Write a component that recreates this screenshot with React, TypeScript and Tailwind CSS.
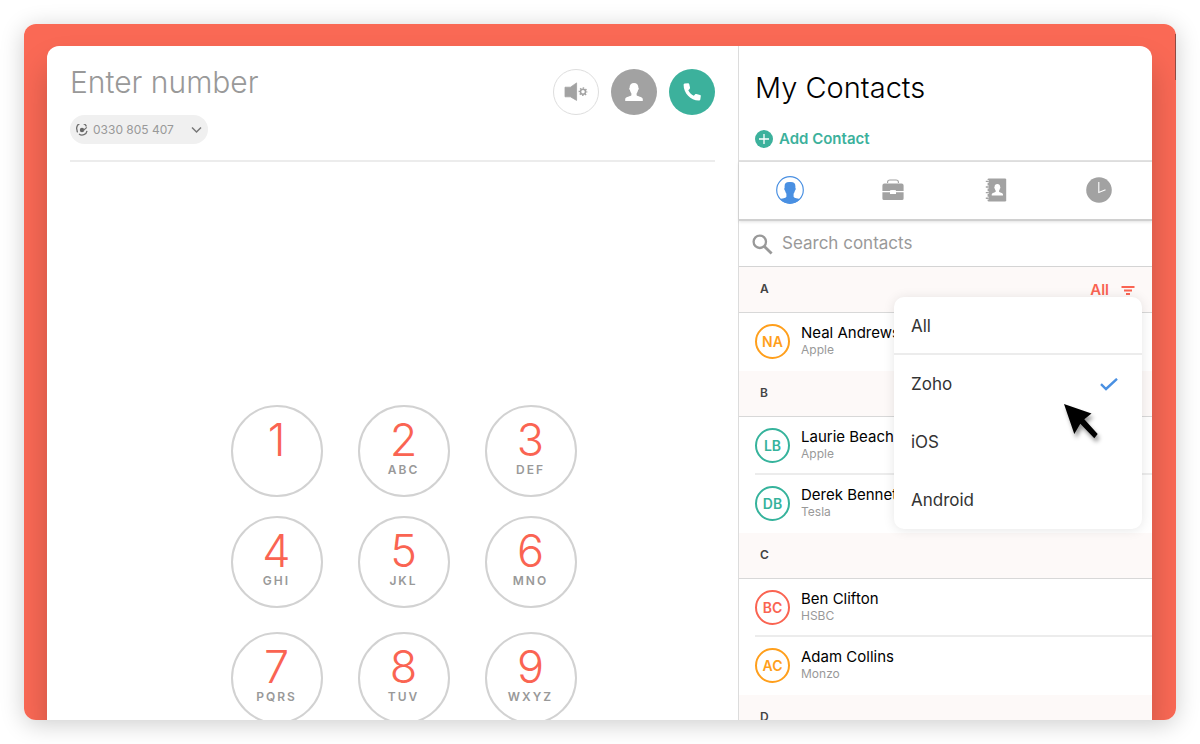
import { useState, type ReactNode } from "react";

type Contact = { initials: string; name: string; company: string; tone: string };
type Group = { letter: string; contacts: Contact[] };

const orange = "border-[#ff9f1c] text-[#ff9f1c]";
const teal = "border-[#36b39c] text-[#36b39c]";
const coral = "border-[#fa6452] text-[#fa6452]";

const groups: Group[] = [
  { letter: "A", contacts: [{ initials: "NA", name: "Neal Andrews", company: "Apple", tone: orange }] },
  {
    letter: "B",
    contacts: [
      { initials: "LB", name: "Laurie Beach", company: "Apple", tone: teal },
      { initials: "DB", name: "Derek Bennet", company: "Tesla", tone: teal },
    ],
  },
  {
    letter: "C",
    contacts: [
      { initials: "BC", name: "Ben Clifton", company: "HSBC", tone: coral },
      { initials: "AC", name: "Adam Collins", company: "Monzo", tone: orange },
    ],
  },
  { letter: "D", contacts: [] },
];

const keys: [string, string][] = [
  ["1", ""],
  ["2", "ABC"],
  ["3", "DEF"],
  ["4", "GHI"],
  ["5", "JKL"],
  ["6", "MNO"],
  ["7", "PQRS"],
  ["8", "TUV"],
  ["9", "WXYZ"],
];

const PERSON =
  "M9 0C11.8 0 13.4 2 13.4 4.8C14 5 13.9 6.8 13.1 7.1C12.8 8.6 12.2 9.7 11.6 10.4V12.3C12.4 13.4 17.2 13.7 17.8 15.9V18H0.2V15.9C0.8 13.7 5.6 13.4 6.4 12.3V10.4C5.8 9.7 5.2 8.6 4.9 7.1C4.1 6.8 4 5 4.6 4.8C4.6 2 6.2 0 9 0Z";

function SpeakerIcon() {
  return (
    <svg width="24" height="20" viewBox="0 0 24 20" fill="#a2a2a2" aria-hidden="true">
      <path d="M1 5.2h5.4L12.6 0.9V18.4L6.4 14.8H1Z" stroke="#a2a2a2" strokeWidth=".8" strokeLinejoin="round" />
      <circle cx="19" cy="9.700" r="2.500" fill="none" stroke="#a2a2a2" strokeWidth="1.500" />
      <circle cx="19" cy="9.700" r="3.700" fill="none" stroke="#a2a2a2" strokeWidth="1.400" strokeDasharray="1.453 1.453" strokeDashoffset=".73" />
    </svg>
  );
}

function ProfileIcon() {
  return (
    <svg width="28" height="28" viewBox="0 0 28 28" aria-hidden="true">
      <circle cx="14" cy="14" r="13.300" fill="#fff" stroke="#4a90e2" strokeWidth="1.200" />
      <path
        fill="#4a90e2"
        d="M14 6c3.600-.3 5.500 1 5.400 4.400v1.500c.6.300.4 2.400-.4 2.700-.3 1.400-.7 2.500-1.400 3.200v3c.8 1.600 4.600 1.300 6 2.600A13.300 13.300 0 0 1 4.400 23.400c1.400-1.300 5.200-1 6-2.600v-3c-.7-.7-1.100-1.800-1.400-3.200-.8-.3-1-2.400-.4-2.700v-1.500C8.500 7 10.400 5.700 14 6Z"
      />
    </svg>
  );
}

function BriefcaseIcon() {
  return (
    <svg width="22" height="22" viewBox="0 0 22 22" aria-hidden="true">
      <path d="M5.600 4V3Q5.600 1 8 1H14Q16.400 1 16.400 3V4" fill="none" stroke="#a2a2a2" strokeWidth="1.100" />
      <path fill="#a2a2a2" d="M2.400 4.500h17.200q2 0 2 2v5.500h-7.600v-.8H8v.8H.4V6.500Q.4 4.500 2.400 4.500Z" />
      <path fill="#a2a2a2" d="M.4 13.200h7.600v1.700h6v-1.700h7.600v6.300q0 1.600-1.600 1.600H2q-1.600 0-1.600-1.600Z" />
      <rect x="9" y="11.200" width="4" height="3" rx=".6" fill="#fff" />
    </svg>
  );
}

function AddressBookIcon() {
  return (
    <svg width="22" height="24" viewBox="0 0 22 24" aria-hidden="true">
      <rect x="2.600" y=".4" width="18.600" height="23" rx="1.200" fill="#a2a2a2" />
      <path d="M2 3.400h1.800M2 9h1.800M2 14.600h1.800M2 20.200h1.800" stroke="#fff" strokeWidth="2.800" />
      <path d="M.8 3.400h3M.8 9h3M.8 14.600h3M.8 20.200h3" stroke="#a2a2a2" strokeWidth="1.400" />
      <g transform="translate(6.600 6) scale(.64)">
        <path fill="#fff" d={PERSON} />
      </g>
    </svg>
  );
}

function ClockIcon() {
  return (
    <svg width="26" height="26" viewBox="0 0 26 26" aria-hidden="true">
      <circle cx="13" cy="13" r="12.800" fill="#a2a2a2" />
      <path d="M12.800 5V15.500L19.500 12.800" fill="none" stroke="#fff" strokeWidth="1.100" />
    </svg>
  );
}

function RoundButton({ label, className, children }: { label: string; className: string; children: ReactNode }) {
  return (
    <button aria-label={label} className={`flex size-[46px] items-center justify-center rounded-full ${className}`}>
      {children}
    </button>
  );
}

function Dialler() {
  return (
    <section className="flex min-w-0 flex-1 flex-col px-[23px]">
      <header className="flex h-[116px] shrink-0 items-start justify-between border-b-2 border-[#ececec] pt-[23px]">
        <div className="flex min-w-0 flex-col items-start">
          <input
            aria-label="Enter number"
            placeholder="Enter number"
            className="h-[26px] w-80 bg-transparent text-[30px] leading-[26px] font-light text-[#333] outline-none placeholder:text-[#999]"
          />
          <div className="relative mt-5">
            <svg className="pointer-events-none absolute top-[9px] left-[6px]" width="12" height="12" viewBox="0 0 12 12" fill="none" stroke="#707070" aria-hidden="true">
              <path d="M10.400 2.400A5 5 0 0 0 1 6a5 5 0 0 0 .6 2.400M3 10a5 5 0 0 0 8-3.200" strokeWidth="1.300" />
              <circle cx="6" cy="6" r="2.200" fill="#666" stroke="none" />
              <path d="M7 6.800 10.800 3.400" strokeWidth="1.200" />
            </svg>
            <select
              aria-label="Outgoing number"
              className="h-[29px] w-[138px] appearance-none rounded-full bg-[#f0f0f0] pl-[23px] text-[12px] text-[#999] outline-none"
            >
              <option>0330 805 407</option>
            </select>
            <svg className="pointer-events-none absolute top-[11px] right-[6px]" width="11" height="8" viewBox="0 0 11 8" fill="none" stroke="#777" strokeWidth="1.500" aria-hidden="true">
              <path d="M1 1.500 5.500 6 10 1.500" />
            </svg>
          </div>
        </div>
        <div className="flex gap-3">
          <RoundButton label="Audio settings" className="border border-[#dedede] bg-white">
            <SpeakerIcon />
          </RoundButton>
          <RoundButton label="Choose contact" className="bg-[#a2a2a2]">
            <svg width="18" height="18" viewBox="0 0 18 18" fill="#fff" aria-hidden="true">
              <path d={PERSON} />
            </svg>
          </RoundButton>
          <RoundButton label="Call" className="bg-[#3cb19c]">
            <svg width="18" height="18" viewBox="0 0 18 18" fill="#fff" aria-hidden="true">
              <path d="M1.600.6 5 .2C5.700.1 6 .5 6.200 1L7 4.600C7.100 5.200 7 5.600 6.600 6L5.300 7.200C6.500 9.600 8.300 11.400 10.800 12.700L12 11.500C12.400 11.100 12.900 11 13.400 11.100L17 11.900C17.600 12 17.900 12.400 17.800 13L17.300 16.400C17.200 17.100 16.800 17.500 16.100 17.500C7.700 17.700.600 10.500.600 1.800.600 1.100.900.700 1.600.6Z" />
            </svg>
          </RoundButton>
        </div>
      </header>
      <div className="flex justify-center pt-[243px] pl-[22px]">
        <div className="grid grid-cols-3 grid-rows-[111px_116px_92px] gap-x-[35px]">
          {keys.map(([digit, letters]) => (
            <button key={digit} className="flex size-[92px] flex-col items-center rounded-full border-2 border-[#d2d2d2] pt-[11px]">
              <span className="text-[45px] leading-[44px] font-light text-[#fa6452]">{digit}</span>
              <span className="text-[12px] leading-4 font-semibold tracking-[2px] text-[#999]">{letters}</span>
            </button>
          ))}
        </div>
      </div>
    </section>
  );
}

function FilterMenu({ value, onChange }: { value: string; onChange: (v: string) => void }) {
  return (
    <div className="absolute top-[30px] right-[10px] z-10 w-[248px] rounded-[10px] bg-white shadow-[0_1px_12px_rgba(0,0,0,0.10)]">
      <ul>
        {["All", "Zoho", "iOS", "Android"].map((option) => (
          <li key={option} className="h-[58px] first:border-b-2 first:border-[#ececec]">
            <button
              onClick={() => onChange(option)}
              className="flex h-[58px] w-full items-center justify-between pt-px pr-6 pl-[17px] text-left text-[17px] text-[#333]"
            >
              {option}
              {option === value && (
                <svg width="18" height="14" viewBox="0 0 18 14" fill="none" stroke="#4a90e2" strokeWidth="2.400" aria-hidden="true">
                  <path d="M1 6.200 6 11 17 .8" />
                </svg>
              )}
            </button>
          </li>
        ))}
      </ul>
      <svg
        className="pointer-events-none absolute top-[107px] left-[170px] overflow-visible drop-shadow-[2px_4px_2px_rgba(0,0,0,0.4)]"
        width="34"
        height="35"
        viewBox="0 0 34 35"
        aria-hidden="true"
      >
        <path d="M0 0 27.500 9.500 20.300 15.300 33.700 30 30.300 34.300 16.300 19.700 10.300 30Z" />
      </svg>
    </div>
  );
}

function Contacts() {
  const [filter, setFilter] = useState("Zoho");
  return (
    <aside className="flex w-[414px] shrink-0 flex-col border-l border-[#dcdcdc]">
      <header className="flex h-[116px] shrink-0 flex-col items-start border-b-2 border-[#e2e2e2] pt-6 pl-4">
        <h1 className="text-[29px] leading-9 font-light text-black">My Contacts</h1>
        <button className="mt-[23px] flex items-center gap-[6px] text-[15px] leading-5 font-semibold text-[#3cb19c]">
          <svg width="18" height="18" viewBox="0 0 18 18" aria-hidden="true">
            <circle cx="9" cy="9" r="9" fill="#3cb19c" />
            <path d="M9 4v10M4 9h10" stroke="#fff" strokeWidth="1.300" />
          </svg>
          Add Contact
        </button>
      </header>
      <nav className="grid h-[59px] shrink-0 grid-cols-4 border-b-2 border-[#d0d0d0] pr-[2px] pb-px shadow-[0_1px_3px_rgba(0,0,0,0.12)]">
        <button aria-label="People" className="flex items-center justify-center">
          <ProfileIcon />
        </button>
        <button aria-label="Companies" className="flex items-center justify-center">
          <BriefcaseIcon />
        </button>
        <button aria-label="Address book" className="flex items-center justify-center">
          <AddressBookIcon />
        </button>
        <button aria-label="Recent" className="flex items-center justify-center">
          <ClockIcon />
        </button>
      </nav>
      <label className="flex h-[46px] shrink-0 items-center gap-[9px] border-b border-[#d4d4d4] pt-px pl-[13px]">
        <svg width="21" height="21" viewBox="0 0 21 21" fill="none" stroke="#999" aria-hidden="true">
          <circle cx="7.800" cy="7.800" r="6.200" strokeWidth="2.300" />
          <path d="M12.400 12.400 19.600 19.600" strokeWidth="2.800" />
        </svg>
        <input aria-label="Search contacts" placeholder="Search contacts" className="min-w-0 flex-1 bg-transparent text-[17px] outline-none placeholder:text-[#999]" />
      </label>
      {groups.map((group, index) => (
        <section key={group.letter}>
          <div className="relative flex h-[46px] items-center justify-between border-b border-[#d8d8d8] bg-[#fdf9f8] pr-[17px] pb-[2px] pl-[21px]">
            <h2 className="text-[12px] font-semibold text-[#444]">{group.letter}</h2>
            {index === 0 && (
              <>
                <button className="mt-1 flex items-center gap-3 text-[15px] font-semibold text-[#fa6452]">
                  {"All"}
                  <svg width="14" height="9" viewBox="0 0 14 9" stroke="#fa6452" strokeWidth="2" aria-hidden="true">
                    <path d="M.500 1h13M3 4.500h8M5 8h4" />
                  </svg>
                </button>
                <FilterMenu value={filter} onChange={setFilter} />
              </>
            )}
          </div>
          <ul>
            {group.contacts.map((contact) => (
              <li key={contact.name} className="group pl-4">
                <div className="flex h-[58px] items-center gap-[11px] border-b-2 border-[#ececec] group-last:border-transparent">
                  <span className={`flex size-[35px] shrink-0 items-center justify-center rounded-full border-2 text-[14px] font-semibold ${contact.tone}`}>
                    {contact.initials}
                  </span>
                  <div>
                    <p className="text-[15px] leading-[18px] text-black">{contact.name}</p>
                    <p className="text-[12px] leading-4 text-[#999]">{contact.company}</p>
                  </div>
                </div>
              </li>
            ))}
          </ul>
        </section>
      ))}
    </aside>
  );
}

export default function App() {
  return (
    <main className="h-screen bg-white p-6 font-['Inter','Liberation_Sans',sans-serif]">
      <div className="relative h-full overflow-hidden rounded-[12px] shadow-[0_4px_24px_rgba(0,0,0,0.2)]">
        <div className="flex h-full overflow-hidden bg-[#fa6955] pt-[22px] pr-6 pl-[23px]">
          <div className="flex min-w-0 flex-1 overflow-hidden rounded-t-[12px] bg-white shadow-[0_20px_32px_rgba(0,0,0,0.2)]">
            <Dialler />
            <Contacts />
          </div>
        </div>
        <div className="absolute top-[10px] right-0 h-[46px] w-px bg-[#8f4a42]" />
      </div>
    </main>
  );
}
